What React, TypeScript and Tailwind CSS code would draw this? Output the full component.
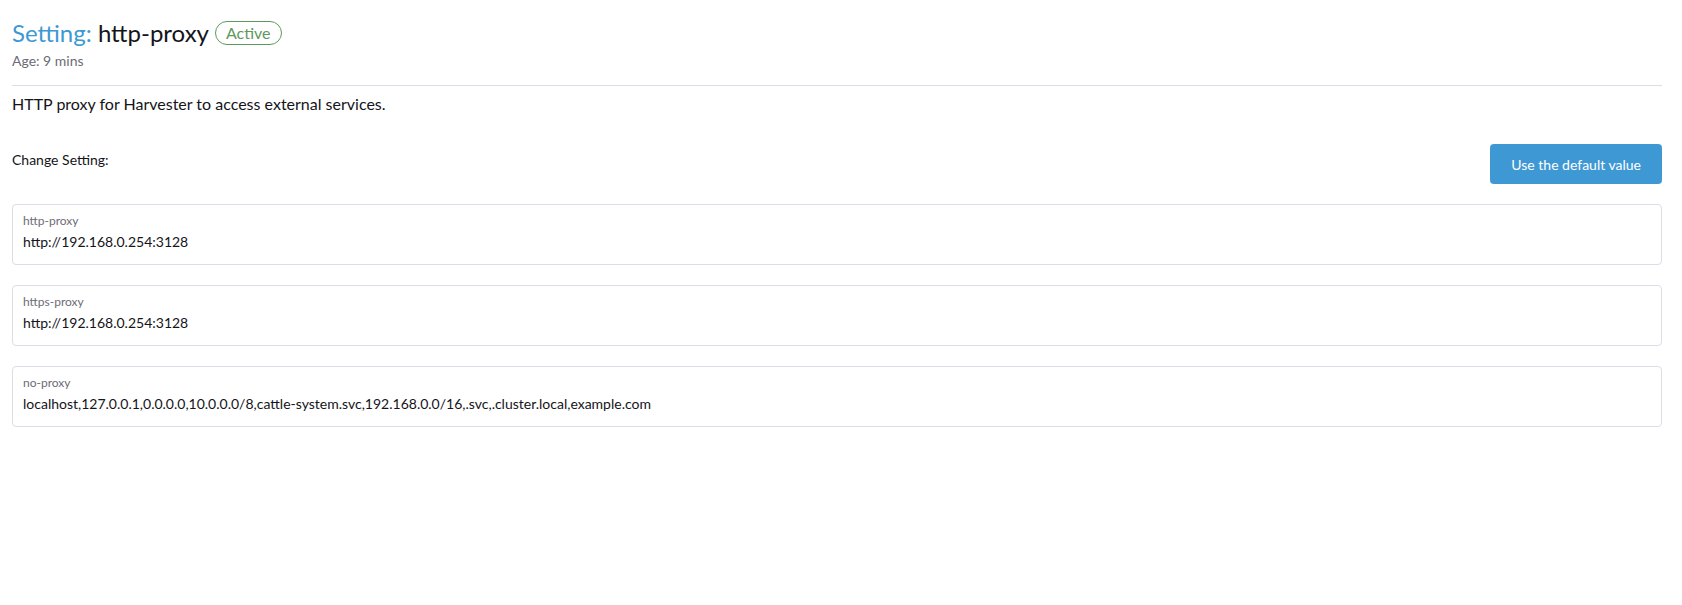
import React from 'react';

const fields = [
  { label: 'http-proxy', value: 'http://192.168.0.254:3128' },
  { label: 'https-proxy', value: 'http://192.168.0.254:3128' },
  {
    label: 'no-proxy',
    value: 'localhost,127.0.0.1,0.0.0.0,10.0.0.0/8,cattle-system.svc,192.168.0.0/16,.svc,.cluster.local,example.com',
  },
];

const App = () => {
  return (
    <div className="min-h-screen bg-white pl-[12px] pr-[20px] pt-[17px] font-['Lato',sans-serif] text-[#141419]">
      <div className="flex items-center gap-[6px]">
        <h1 className="text-[24px] leading-8 font-normal">
          <span className="text-[#3d98d3]">Setting:</span> http-proxy
        </h1>
        <span className="flex h-6 items-center rounded-full border border-[#5d995d] px-[10px] text-[16px] text-[#5d995d]">
          Active
        </span>
      </div>
      <div className="mt-[2px] text-[14px] leading-5 text-[#6c6c76]">Age: 9 mins</div>
      <div className="mt-[14px] border-t border-[#dcdee7]" />
      <p className="mt-[6px] text-[16px] leading-6">HTTP proxy for Harvester to access external services.</p>

      <div className="mt-[28px] flex items-start justify-between">
        <h4 className="pt-[6px] text-[14px] leading-5">Change Setting:</h4>
        <button className="h-10 rounded-[4px] bg-[#3d98d3] px-[21px] text-[14px] text-white">
          Use the default value
        </button>
      </div>

      <div className="mt-[20px] flex flex-col gap-[20px]">
        {fields.map((f) => (
          <div key={f.label} className="rounded-[4px] border border-[#dcdee7] px-[10px] pt-[8px] pb-[12px]">
            <div className="text-[12px] leading-4 text-[#6c6c76]">{f.label}</div>
            <div className="mt-[3px] text-[14px] leading-5">{f.value}</div>
          </div>
        ))}
      </div>
    </div>
  );
};

export default App;
